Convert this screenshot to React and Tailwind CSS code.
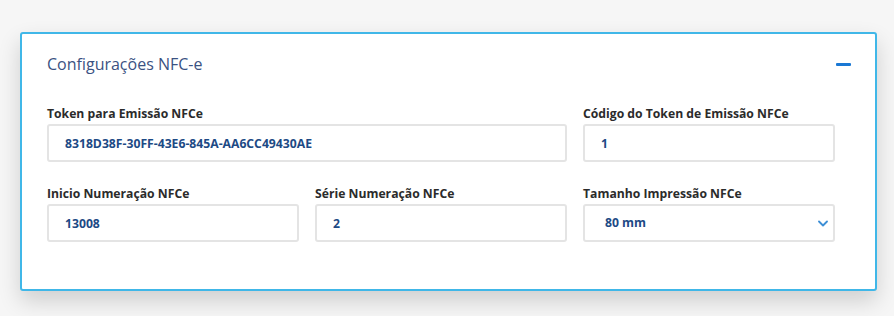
export default function App() {
  const font = { fontFamily: '"Open Sans", "Noto Sans", sans-serif' };

  const inputCls =
    "h-[38px] w-full rounded-[3px] border-2 border-[#e4e4e4] bg-white pl-[16px] text-[12.2px] font-bold text-[#1d4a85] outline-none";
  const labelCls = "text-[12.2px] leading-[14px] font-bold text-[#2b2b2b]";

  return (
    <div className="h-[316px] w-[894px] bg-[#f6f6f6] pt-[32px] pl-[20px]" style={font}>
      {/* card */}
      <div className="h-[259px] w-[857px] rounded-[3px] border-2 border-[#40b7e8] bg-white shadow-[0_10px_22px_rgba(0,0,0,0.16)]">
        {/* header */}
        <div className="flex items-center justify-between pl-[25px] pr-[24px] pt-[19px]">
          <h2 className="text-[16px] leading-[22px] font-normal text-[#3b5282]">Configurações NFC-e</h2>
          <div className="h-[3px] w-[15px] rounded-[1px] bg-[#1a78d4]" />
        </div>

        {/* fields */}
        <div className="mt-[32px] grid w-[788px] grid-cols-3 gap-x-[16px] gap-y-[25px] pl-[25px] box-content">
          <div className="col-span-2 flex flex-col gap-[3px]">
            <label className={labelCls}>Token para Emissão NFCe</label>
            <input className={inputCls} readOnly value="8318D38F-30FF-43E6-845A-AA6CC49430AE" />
          </div>
          <div className="flex flex-col gap-[3px]">
            <label className={labelCls}>Código do Token de Emissão NFCe</label>
            <input className={inputCls} readOnly value="1" />
          </div>

          <div className="flex flex-col gap-[3px]">
            <label className={labelCls}>Inicio Numeração NFCe</label>
            <input className={inputCls} readOnly value="13008" />
          </div>
          <div className="flex flex-col gap-[3px]">
            <label className={labelCls}>Série Numeração NFCe</label>
            <input className={inputCls} readOnly value="2" />
          </div>
          <div className="flex flex-col gap-[3px]">
            <label className={labelCls}>Tamanho Impressão NFCe</label>
            <div className="relative">
              <div className="flex h-[38px] w-full items-center rounded-[3px] border-2 border-[#e4e4e4] bg-white pl-[20px] text-[12.2px] font-bold text-[#1d4a85]">
                80 mm
              </div>
              <svg
                className="absolute right-[7px] top-[16px]"
                width="10"
                height="7"
                viewBox="0 0 10 7"
                fill="none"
              >
                <path d="M1 1.5l4 4 4-4" stroke="#3d8fd6" strokeWidth="1.8" strokeLinecap="round" strokeLinejoin="round" />
              </svg>
            </div>
          </div>
        </div>
      </div>
    </div>
  );
}
